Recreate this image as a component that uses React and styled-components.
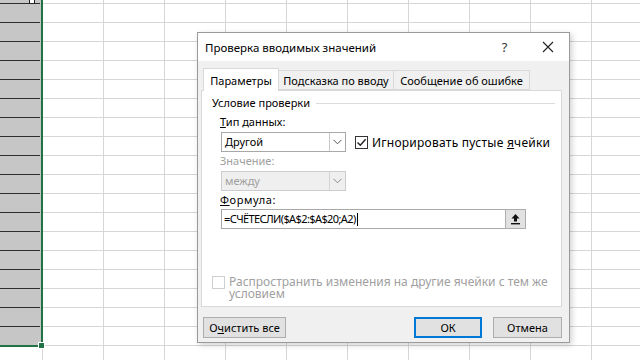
import React from "react";
import styled, { createGlobalStyle } from "styled-components";

const GlobalStyle = createGlobalStyle`
  html, body {
    margin: 0;
    padding: 0;
    background: #ffffff;
  }
  body {
    font-family: "Noto Sans", "Open Sans", sans-serif;
    font-size: 11px;
    color: #000000;
  }
`;

const ChevronDown = ({ color = "#555" }) => (
  <svg width="9" height="6" viewBox="0 0 9 6">
    <path d="M0.5 0.8 L4.5 4.8 L8.5 0.8" fill="none" stroke={color} strokeWidth="1" />
  </svg>
);

const CheckMark = () => (
  <svg width="11" height="11" viewBox="0 0 11 11">
    <path d="M1.5 5.5 L4.3 8.3 L9.6 2.2" fill="none" stroke="#222" strokeWidth="1.4" />
  </svg>
);

const CollapseIcon = () => (
  <svg width="11" height="12" viewBox="0 0 11 12">
    <path d="M5.5 1 L9.5 5.5 L7 5.5 L7 8.5 L4 8.5 L4 5.5 L1.5 5.5 Z" fill="#111" />
    <rect x="1" y="10" width="9" height="1.4" fill="#111" />
  </svg>
);

const CloseIcon = () => (
  <svg width="12" height="12" viewBox="0 0 12 12">
    <path d="M1 1 L11 11 M11 1 L1 11" stroke="#222" strokeWidth="1.1" />
  </svg>
);

function App() {
  return (
    <>
      <GlobalStyle />
      <Sheet>
        <SelectedColumn>
          <ActiveCellMark />
          <FillHandle />
        </SelectedColumn>

        <Dialog>
          <TitleBar>
            <Title>Проверка вводимых значений</Title>
            <TitleButton>?</TitleButton>
            <TitleButton>
              <CloseIcon />
            </TitleButton>
          </TitleBar>

          <Body>
            <Tabs>
              <Tab active width={76}>Параметры</Tab>
              <Tab width={116}>Подсказка по вводу</Tab>
              <Tab width={137}>Сообщение об ошибке</Tab>
            </Tabs>

            <Panel>
              <GroupHeader>
                <span>Условие проверки</span>
                <GroupLine />
              </GroupHeader>

              <GroupBody>
                <FieldLabel first>
                  <u>Т</u>ип данных:
                </FieldLabel>
                <Row>
                  <Select>
                    <SelectValue>Другой</SelectValue>
                    <SelectArrow>
                      <ChevronDown />
                    </SelectArrow>
                  </Select>
                  <CheckRow>
                    <CheckBox>
                      <CheckMark />
                    </CheckBox>
                    <CheckLabel>
                      Игнорировать пустые <u>я</u>чейки
                    </CheckLabel>
                  </CheckRow>
                </Row>

                <FieldLabel disabled>Значение:</FieldLabel>
                <Row>
                  <Select disabled>
                    <SelectValue disabled>между</SelectValue>
                    <SelectArrow disabled>
                      <ChevronDown color="#8a8a8a" />
                    </SelectArrow>
                  </Select>
                </Row>

                <FieldLabel wide>
                  <u>Ф</u>ормула:
                </FieldLabel>
                <Row tight>
                  <FormulaInput>
                    =СЧЁТЕСЛИ($A$2:$A$20;A2)
                    <Caret />
                  </FormulaInput>
                  <RefButton>
                    <CollapseIcon />
                  </RefButton>
                </Row>
              </GroupBody>

              <SpreadRow>
                <CheckBox disabled />
                <SpreadText>
                  Распространить изменения на другие ячейки с тем же
                  <br />
                  условием
                </SpreadText>
              </SpreadRow>
            </Panel>

            <Footer>
              <Button width={83}>
                О<u>ч</u>истить все
              </Button>
              <Spacer />
              <Button width={68} primary>
                ОК
              </Button>
              <Button width={69}>Отмена</Button>
            </Footer>
          </Body>
        </Dialog>
      </Sheet>
    </>
  );
}

const Sheet = styled.div`
  position: relative;
  width: 640px;
  height: 360px;
  overflow: hidden;
  display: flex;
  align-items: flex-start;
  background-color: #ffffff;
  background-image: linear-gradient(to right, #d6d6d6 1px, transparent 1px),
    linear-gradient(to bottom, #d6d6d6 1px, transparent 1px);
  background-size: 61px 19px;
  background-position: 42px 3px;
`;

const SelectedColumn = styled.div`
  position: relative;
  width: 41px;
  height: 345px;
  background-color: #c6c6c6;
  background-image: linear-gradient(to bottom, #2e2e2e 1px, transparent 1px);
  background-size: 40px 19px;
  background-repeat: repeat-y;
  background-position: 0 3px;
  border-right: 2px solid #217346;
  border-bottom: 2px solid #217346;
`;

const ActiveCellMark = styled.div`
  position: absolute;
  left: 29px;
  top: -2px;
  width: 4px;
  height: 4px;
  background: #ffffff;
  border: 1px solid #222;
`;

const FillHandle = styled.div`
  position: absolute;
  right: -4px;
  bottom: -4px;
  width: 5px;
  height: 5px;
  background: #217346;
  border: 1px solid #ffffff;
`;

const Dialog = styled.div`
  position: absolute;
  left: 197px;
  top: 32px;
  width: 371px;
  height: 309px;
  border: 1px solid #9a9a9a;
  box-shadow: 2px 2px 6px rgba(0, 0, 0, 0.18);
  display: flex;
  flex-direction: column;
  background: #f0f0f0;
`;

const TitleBar = styled.div`
  height: 28px;
  background: #ffffff;
  display: flex;
  align-items: center;
  padding-left: 7px;
`;

const Title = styled.div`
  flex: 1;
  font-size: 11.5px;
`;

const TitleButton = styled.div`
  width: 43px;
  height: 28px;
  display: flex;
  align-items: center;
  justify-content: center;
  font-size: 13px;
  color: #333;
`;

const Body = styled.div`
  flex: 1;
  display: flex;
  flex-direction: column;
  padding: 6px 7px 4px 3px;
`;

const Tabs = styled.div`
  display: flex;
  align-items: flex-end;
  height: 23px;
  padding-left: 2px;
  position: relative;
  z-index: 1;
`;

const Tab = styled.div`
  width: ${(p) => p.width}px;
  height: ${(p) => (p.active ? "23px" : "20px")};
  margin-bottom: ${(p) => (p.active ? "-1px" : "0")};
  display: flex;
  align-items: center;
  justify-content: center;
  background: ${(p) => (p.active ? "#ffffff" : "#f0f0f0")};
  border: 1px solid #d9d9d9;
  border-bottom: ${(p) => (p.active ? "none" : "1px solid #d9d9d9")};
  margin-right: -1px;
  box-sizing: border-box;
  white-space: nowrap;
`;

const Panel = styled.div`
  height: 217px;
  box-sizing: border-box;
  background: #ffffff;
  border: 1px solid #d9d9d9;
  padding: 4px 6px 0 10px;
  display: flex;
  flex-direction: column;
`;

const GroupHeader = styled.div`
  display: flex;
  align-items: center;
  height: 16px;
  line-height: 16px;
`;

const GroupLine = styled.div`
  flex: 1;
  height: 1px;
  background: #dcdcdc;
  margin-left: 6px;
`;

const GroupBody = styled.div`
  display: flex;
  flex-direction: column;
  padding-left: 8px;
`;

const FieldLabel = styled.div`
  height: 16px;
  line-height: 16px;
  margin-top: ${(p) => (p.first ? "3px" : "1px")};
  letter-spacing: ${(p) => (p.wide ? "0.6px" : "0")};
  color: ${(p) => (p.disabled ? "#a0a0a0" : "#000")};
`;

const Row = styled.div`
  display: flex;
  align-items: center;
  margin-top: ${(p) => (p.tight ? "1px" : "2px")};
  margin-left: 1px;
`;

const Select = styled.div`
  width: 125px;
  height: 20px;
  box-sizing: border-box;
  display: flex;
  border: 1px solid ${(p) => (p.disabled ? "#cccccc" : "#a8a8a8")};
  background: ${(p) => (p.disabled ? "#efefef" : "#ffffff")};
`;

const SelectValue = styled.div`
  flex: 1;
  padding-left: 3px;
  line-height: 18px;
  color: ${(p) => (p.disabled ? "#a0a0a0" : "#000")};
`;

const SelectArrow = styled.div`
  width: 15px;
  display: flex;
  align-items: center;
  justify-content: center;
  border-left: 1px solid ${(p) => (p.disabled ? "#d4d4d4" : "#c8c8c8")};
`;

const CheckRow = styled.div`
  display: flex;
  align-items: center;
  margin-left: 9px;
  gap: 4px;
`;

const CheckLabel = styled.span`
  font-size: 12px;
  letter-spacing: 0.25px;
`;

const CheckBox = styled.div`
  width: 13px;
  height: 13px;
  box-sizing: border-box;
  border: 1px solid ${(p) => (p.disabled ? "#cfcfcf" : "#333333")};
  background: #ffffff;
  display: flex;
  align-items: center;
  justify-content: center;
  flex-shrink: 0;
`;

const FormulaInput = styled.div`
  width: 284px;
  height: 20px;
  box-sizing: border-box;
  border: 1px solid #a8a8a8;
  border-right: none;
  padding-left: 2px;
  line-height: 18px;
  letter-spacing: -0.6px;
  display: flex;
  align-items: center;
  white-space: nowrap;
`;

const Caret = styled.span`
  display: inline-block;
  width: 1px;
  height: 13px;
  background: #000;
  margin-left: 1px;
`;

const RefButton = styled.div`
  width: 21px;
  height: 20px;
  box-sizing: border-box;
  border: 1px solid #adadad;
  background: #e1e1e1;
  display: flex;
  align-items: center;
  justify-content: center;
`;

const SpreadRow = styled.div`
  display: flex;
  align-items: flex-start;
  gap: 4px;
  margin-top: 47px;
  color: #a0a0a0;
`;

const SpreadText = styled.div`
  font-size: 12px;
  line-height: 12px;
`;

const Footer = styled.div`
  display: flex;
  align-items: center;
  margin-top: 10px;
  padding-left: 2px;
  gap: 11px;
`;

const Spacer = styled.div`
  flex: 1;
`;

const Button = styled.div`
  width: ${(p) => p.width}px;
  height: 21px;
  box-sizing: border-box;
  display: flex;
  align-items: center;
  justify-content: center;
  background: #e1e1e1;
  border: ${(p) => (p.primary ? "2px solid #0078d7" : "1px solid #adadad")};
  white-space: nowrap;
`;

export default App;
